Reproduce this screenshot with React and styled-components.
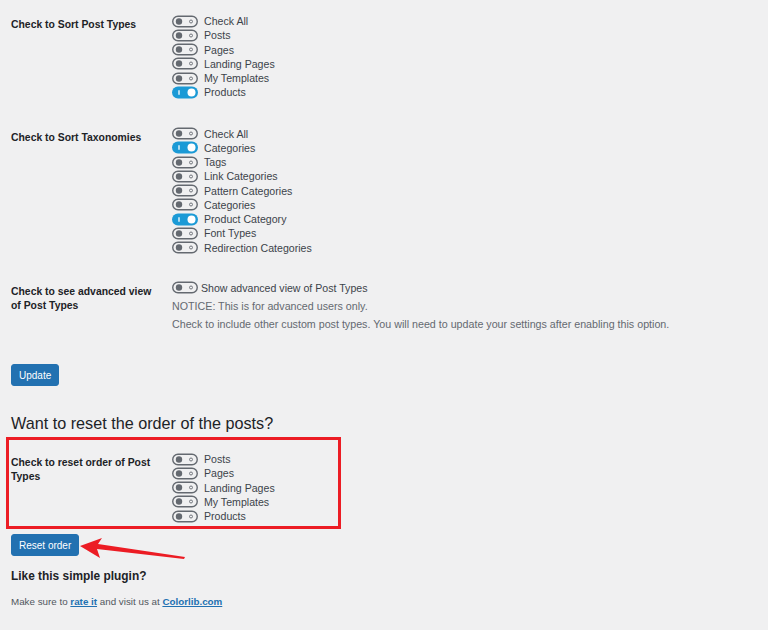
import React from "react";
import styled, { createGlobalStyle } from "styled-components";

const GlobalStyle = createGlobalStyle`
  body {
    margin: 0;
    background: #f0f0f1;
    font-family: "Liberation Sans", Arial, sans-serif;
    color: #1d2327;
  }
`

const Page = styled.div`
  position: relative;
  padding: 14px 0 40px 11px;
  min-height: 630px;
  box-sizing: border-box;
`

const Row = styled.div`
  display: grid;
  grid-template-columns: 161px 1fr;
  margin-top: ${(p) => p.$top || 0}px;
`

const RowLabel = styled.div`
  padding-top: 4px;
  font-size: 10.4px;
  font-weight: 700;
  line-height: 14px;
  padding-right: 10px;
`

const ToggleList = styled.div`
  display: flex;
  flex-direction: column;
`

const ToggleRow = styled.label`
  display: flex;
  align-items: center;
  gap: ${(p) => (p.$tight ? 3 : 6)}px;
  height: 14.25px;
  font-size: 10.6px;
  color: #3c434a;
`

const Note = styled.p`
  margin: 4px 0 0;
  font-size: 10.7px;
  line-height: 14px;
  color: #646970;
`

const Button = styled.button`
  display: block;
  margin-top: ${(p) => p.$top || 0}px;
  height: 22px;
  padding: 0 7px;
  border: 1px solid #2271b1;
  border-radius: 3px;
  background: #2271b1;
  color: #fff;
  font-family: inherit;
  font-size: 10px;
`

const Heading = styled.h2`
  margin: 27px 0 0;
  font-size: 16.2px;
  font-weight: 400;
  line-height: 20px;
  color: #1d2327;
`

const Highlight = styled.div`
  width: 335px;
  margin: 4px 0 0 -5px;
  padding: 12px 0 3px 2px;
  border: 3px solid #ec1c24;
  box-sizing: border-box;
  height: 92px;
`

const SubHeading = styled.h3`
  margin: 12px 0 0;
  font-size: 11.9px;
  font-weight: 700;
  line-height: 16px;
`

const Footer = styled.p`
  margin: 11px 0 0;
  font-size: 9.8px;
  line-height: 14px;
  color: #50575e;

  a {
    color: #2271b1;
    font-weight: 700;
    text-decoration: underline;
  }
`

const Arrow = styled.svg`
  position: absolute;
  left: 78px;
  top: 536px;
`

const Toggle = ({ on }) =>
  on ? (
    <svg width="26" height="13" viewBox="0 0 26 13">
      <rect x="0" y="0.5" width="26" height="12" rx="6" fill="#1b9ad6" />
      <line x1="7" y1="4.3" x2="7" y2="8.7" stroke="#fff" strokeWidth="1.3" />
      <circle cx="19.5" cy="6.5" r="4" fill="#fff" />
    </svg>
  ) : (
    <svg width="26" height="13" viewBox="0 0 26 13">
      <rect x="0.75" y="1.25" width="24.5" height="10.5" rx="5.25" fill="none" stroke="#646970" strokeWidth="1.4" />
      <circle cx="7" cy="6.5" r="3.2" fill="#646970" />
      <circle cx="19" cy="6.5" r="1.5" fill="none" stroke="#646970" strokeWidth="0.9" />
    </svg>
  )

const Toggles = ({ items }) => (
  <ToggleList>
    {items.map(([label, on], i) => (
      <ToggleRow key={i}>
        <Toggle on={on} />
        {label}
      </ToggleRow>
    ))}
  </ToggleList>
)

const postTypes = [
  ["Check All"],
  ["Posts"],
  ["Pages"],
  ["Landing Pages"],
  ["My Templates"],
  ["Products", true],
]

const taxonomies = [
  ["Check All"],
  ["Categories", true],
  ["Tags"],
  ["Link Categories"],
  ["Pattern Categories"],
  ["Categories"],
  ["Product Category", true],
  ["Font Types"],
  ["Redirection Categories"],
]

const resetTypes = [["Posts"], ["Pages"], ["Landing Pages"], ["My Templates"], ["Products"]]

export default () => {
  return (
    <Page>
      <GlobalStyle />
      <Row>
        <RowLabel>Check to Sort Post Types</RowLabel>
        <Toggles items={postTypes} />
      </Row>
      <Row $top={27}>
        <RowLabel>Check to Sort Taxonomies</RowLabel>
        <Toggles items={taxonomies} />
      </Row>
      <Row $top={26}>
        <RowLabel>Check to see advanced view of Post Types</RowLabel>
        <div>
          <ToggleRow $tight>
            <Toggle />
            Show advanced view of Post Types
          </ToggleRow>
          <Note>NOTICE: This is for advanced users only.</Note>
          <Note>
            Check to include other custom post types. You will need to update your settings after enabling this option.
          </Note>
        </div>
      </Row>
      <Button $top={33}>Update</Button>
      <Heading>Want to reset the order of the posts?</Heading>
      <Highlight>
        <Row>
          <RowLabel>Check to reset order of Post Types</RowLabel>
          <Toggles items={resetTypes} />
        </Row>
      </Highlight>
      <Button $top={5}>Reset order</Button>
      <SubHeading>Like this simple plugin?</SubHeading>
      <Footer>
        Make sure to <a href="#">rate it</a> and visit us at <a href="#">Colorlib.com</a>
      </Footer>
      <Arrow width="110" height="26" viewBox="0 0 110 26">
        <polygon points="2,10 24,2 20,8 107,21 106,23 19,13 22,22" fill="#ec1c24" />
      </Arrow>
    </Page>
  );
};
